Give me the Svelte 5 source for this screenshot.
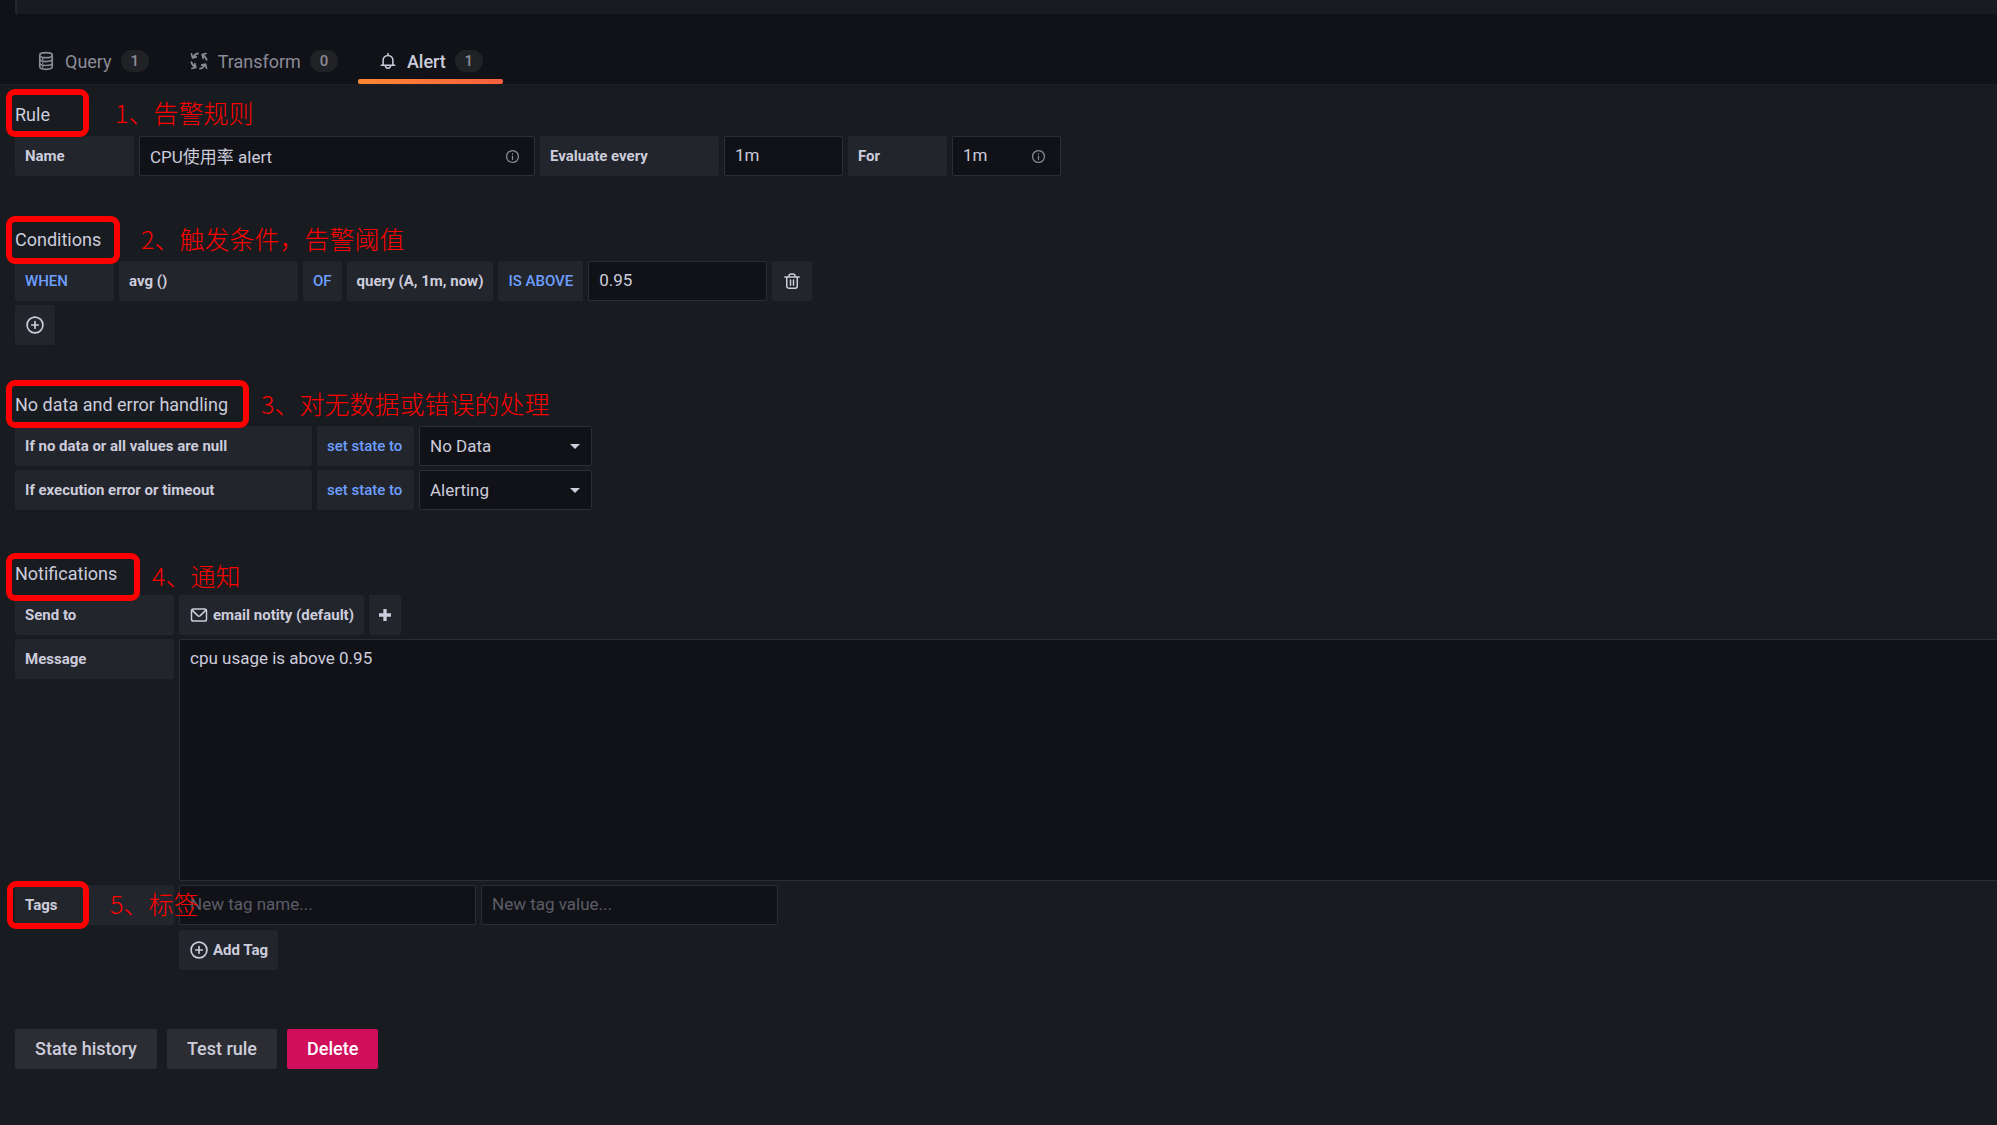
<script lang="ts">
  type Tab = { label: string; icon: string; count: number };
  type Note = { left: number; top: number; width: number; textLeft: number; textTop: number; text: string };

  const tabs: Tab[] = [
    { label: 'Query', icon: 'database', count: 1 },
    { label: 'Transform', icon: 'process', count: 0 },
    { label: 'Alert', icon: 'bell', count: 1 },
  ];

  // freehand callouts laid over the editor
  const notes: Note[] = [
    { left: 6, top: 89, width: 83, textLeft: 115, textTop: 96, text: '1、告警规则' },
    { left: 6, top: 216, width: 114, textLeft: 141, textTop: 222, text: '2、触发条件，告警阈值' },
    { left: 6, top: 380, width: 243, textLeft: 261, textTop: 387, text: '3、对无数据或错误的处理' },
    { left: 6, top: 553, width: 134, textLeft: 152, textTop: 559, text: '4、通知' },
    { left: 7, top: 881, width: 82, textLeft: 110, textTop: 887, text: '5、标签' },
  ];

  let active = $state('Alert');
  let name = $state('CPU使用率 alert');
  let every = $state('1m');
  let pending = $state('1m');
  let threshold = $state('0.95');
  let noDataState = $state('No Data');
  let errorState = $state('Alerting');
  let message = $state('cpu usage is above 0.95');
  let tagName = $state('');
  let tagValue = $state('');
</script>

{#snippet icon(kind: string)}
  <svg class="icon {kind}" viewBox="0 0 24 24" aria-hidden="true">
    {#if kind === 'database'}
      <ellipse cx="12" cy="5" rx="7.5" ry="3" />
      <path d="M4.500 5v14c0 1.700 3.400 3 7.500 3s7.500-1.300 7.500-3V5M4.500 9.700c0 1.700 3.400 3 7.500 3s7.500-1.300 7.500-3M4.500 14.400c0 1.700 3.400 3 7.500 3s7.500-1.300 7.500-3" />
      <path d="M8 9.700v.1M8 14.400v.1M8 19v.1" />
    {:else if kind === 'process'}
      {#each [0, 90, 180, 270] as angle}
        <path d="M3 3.500l1.200 4.700 4.600-1.200M4.500 8C5.800 5.400 8 3.400 10.800 2.800" transform="rotate({angle} 12 12)" />
      {/each}
    {:else if kind === 'bell'}
      <path d="M12 2v2.500M5.500 17.500V11a6.500 6.500 0 0 1 13 0v6.500M3 17.500h18M8.500 18a3.500 3.500 0 0 0 7 0" />
    {:else if kind === 'info'}
      <circle cx="12" cy="12" r="9.5" />
      <path d="M12 11.500v5M12 7.200v.6" />
    {:else if kind === 'trash'}
      <path d="M2.500 6.500h19M5 6.500V19a2.500 2.500 0 0 0 2.500 2.500h9A2.500 2.500 0 0 0 19 19V6.500M8 6V5a2.500 2.500 0 0 1 2.500-2.500h3A2.500 2.500 0 0 1 16 5v1M10 10.500v7M14 10.500v7" />
    {:else if kind === 'plus-circle'}
      <circle cx="12" cy="12" r="9.5" />
      <path d="M12 8v8M8 12h8" />
    {:else if kind === 'envelope'}
      <rect x="2" y="4" width="20" height="16" rx="2.5" />
      <path d="M2.800 5.500l7.500 7.300a2.500 2.500 0 0 0 3.400 0l7.500-7.300" />
    {:else if kind === 'plus'}
      <path d="M12 3v18M3 12h18" />
    {/if}
  </svg>
{/snippet}

<div class="editor">
  <div class="panel-edge"></div>

  <div class="tabs" role="tablist">
    {#each tabs as tab (tab.label)}
      <button
        class="tab"
        class:active={active === tab.label}
        role="tab"
        aria-selected={active === tab.label}
        onclick={() => (active = tab.label)}
      >
        {@render icon(tab.icon)}
        <span>{tab.label}</span>
        <span class="counter">{tab.count}</span>
      </button>
    {/each}
  </div>

  <main class="content">
    <section class="group">
      <h2>Rule</h2>
      <div class="row">
        <label class="label w-name" for="rule-name">Name</label>
        <div class="field w-rule">
          <input id="rule-name" type="text" bind:value={name} />
          {@render icon('info')}
        </div>
        <label class="label w-segment" for="rule-every">Evaluate every</label>
        <div class="field w-every">
          <input id="rule-every" type="text" bind:value={every} />
        </div>
        <label class="label w-for" for="rule-for">For</label>
        <div class="field w-pending">
          <input id="rule-for" type="text" bind:value={pending} />
          {@render icon('info')}
        </div>
      </div>
    </section>

    <section class="group conditions">
      <h2>Conditions</h2>
      <div class="row">
        <button class="label keyword w-when">WHEN</button>
        <button class="label w-segment">avg ()</button>
        <span class="label keyword">OF</span>
        <button class="label">query (A, 1m, now)</button>
        <button class="label keyword">IS ABOVE</button>
        <div class="field w-segment">
          <input type="text" aria-label="Threshold" bind:value={threshold} />
        </div>
        <button class="label square" aria-label="Remove condition">{@render icon('trash')}</button>
      </div>
      <div class="row">
        <button class="label square" aria-label="Add condition">{@render icon('plus-circle')}</button>
      </div>
    </section>

    <section class="group">
      <h2>No data and error handling</h2>
      <div class="row">
        <label class="label w-wide" for="no-data">If no data or all values are null</label>
        <span class="label keyword w-state">set state to</span>
        <div class="field w-select">
          <select id="no-data" bind:value={noDataState}>
            <option>Alerting</option>
            <option>No Data</option>
            <option>Keep Last State</option>
            <option>Ok</option>
          </select>
          <span class="caret"></span>
        </div>
      </div>
      <div class="row">
        <label class="label w-wide" for="exec-error">If execution error or timeout</label>
        <span class="label keyword w-state">set state to</span>
        <div class="field w-select">
          <select id="exec-error" bind:value={errorState}>
            <option>Alerting</option>
            <option>Keep Last State</option>
          </select>
          <span class="caret"></span>
        </div>
      </div>
    </section>

    <section class="group notifications">
      <h2>Notifications</h2>
      <div class="row">
        <span class="label w-notify">Send to</span>
        <span class="label">{@render icon('envelope')}email notity (default)</span>
        <button class="label add" aria-label="Add notification">{@render icon('plus')}</button>
      </div>
      <div class="row">
        <label class="label w-notify" for="message">Message</label>
        <textarea id="message" bind:value={message}></textarea>
      </div>
      <div class="row">
        <label class="label w-notify" for="tag-name">Tags</label>
        <div class="tags">
          <div class="row">
            <div class="field w-wide">
              <input id="tag-name" type="text" placeholder="New tag name..." bind:value={tagName} />
            </div>
            <div class="field w-wide">
              <input type="text" aria-label="Tag value" placeholder="New tag value..." bind:value={tagValue} />
            </div>
          </div>
          <div class="row">
            <button class="label">{@render icon('plus-circle')}Add Tag</button>
          </div>
        </div>
      </div>
    </section>

    <div class="actions">
      <button>State history</button>
      <button>Test rule</button>
      <button class="danger">Delete</button>
    </div>
  </main>

  {#each notes as note (note.text)}
    <div class="mark" style="left: {note.left}px; top: {note.top}px; width: {note.width}px"></div>
    <div class="note" style="left: {note.textLeft}px; top: {note.textTop}px">{note.text}</div>
  {/each}
</div>

<style>
  :global(body) {
    background: #181b1f;
  }
  .editor {
    position: relative;
    min-height: 100vh;
    overflow: hidden;
    background: #181b1f;
    color: #ccccdc;
    font-family: Roboto, "Noto Sans CJK SC", sans-serif;
    font-size: 17px;
  }
  .editor * {
    box-sizing: border-box;
  }
  button, input, select, textarea {
    margin: 0;
    font: inherit;
    color: inherit;
  }
  button {
    border: 0;
    cursor: pointer;
  }

  .panel-edge {
    height: 14px;
    padding-left: 15px;
    background: #111217;
  }
  .panel-edge::before {
    content: '';
    display: block;
    height: 14px;
    border: 1px solid #25272c;
    border-width: 0 0 2px 2px;
    border-radius: 0 0 0 4px;
    background: #181b1f;
  }

  .tabs {
    display: flex;
    align-items: flex-end;
    height: 71px;
    padding-left: 16px;
    background: #111217;
    border-bottom: 1px solid #1e2025;
  }
  .tab {
    position: relative;
    display: flex;
    align-items: center;
    gap: 9px;
    height: 46px;
    padding: 0 20px;
    background: transparent;
    color: #8b8b97;
    font-size: 18px;
  }
  .tab.active {
    color: #ccccdc;
    font-weight: 500;
  }
  .tab.active::after {
    content: '';
    position: absolute;
    left: 0;
    right: 0;
    bottom: 0;
    height: 5px;
    border-radius: 2px;
    background: linear-gradient(90deg, #ff8833, #f55f3e);
  }
  .counter {
    width: 28px;
    height: 22px;
    border-radius: 11px;
    background: #212226;
    color: #8b8b97;
    font-size: 15px;
    font-weight: 500;
    line-height: 22px;
    text-align: center;
  }

  .icon {
    flex-shrink: 0;
    width: 20px;
    height: 20px;
    fill: none;
    stroke: currentColor;
    stroke-width: 2;
    stroke-linecap: round;
    stroke-linejoin: round;
  }
  .icon.bell, .icon.trash, .icon.envelope {
    width: 18px;
    height: 18px;
    margin: 0 1px;
  }
  .icon.info {
    width: 15px;
    height: 15px;
    margin-right: 14px;
    color: #8b8b97;
  }
  .icon.plus {
    width: 16px;
    height: 16px;
    stroke-width: 5;
    stroke-linecap: butt;
  }

  .content {
    padding: 19px 0 48px 15px;
  }
  .group {
    display: flex;
    flex-direction: column;
    gap: 4px;
    margin-bottom: 53px;
  }
  .group.conditions {
    margin-bottom: 49px;
  }
  .group.notifications {
    margin-bottom: 59px;
  }
  h2 {
    margin: 0 0 6px;
    font-size: 18px;
    font-weight: 400;
    line-height: 22px;
  }
  .row {
    display: flex;
    align-items: flex-start;
    gap: 5px;
  }
  .label {
    display: flex;
    align-items: center;
    gap: 4px;
    flex-shrink: 0;
    height: 40px;
    padding: 0 10px;
    border-radius: 2px;
    background: #22252b;
    font-size: 15px;
    font-weight: 700;
    white-space: nowrap;
  }
  .keyword {
    color: #6e9fff;
    font-weight: 500;
  }
  .square {
    width: 40px;
  }
  .add {
    width: 32px;
    padding: 0 8px;
  }

  .field {
    display: flex;
    align-items: center;
    position: relative;
    height: 40px;
    border: 1px solid #2d2e34;
    border-radius: 2px;
    background: #111217;
  }
  .field input, .field select {
    flex: 1;
    min-width: 0;
    height: 100%;
    padding: 0 10px;
    border: 0;
    outline: none;
    background: transparent;
    appearance: none;
  }
  .field input {
    padding-bottom: 2px;
    line-height: 22px;
  }
  .field option {
    background: #111217;
  }
  input::placeholder {
    color: #5c5d66;
    opacity: 1;
  }
  .caret {
    position: absolute;
    right: 11px;
    border: 5px solid transparent;
    border-top-color: currentColor;
    border-bottom: 0;
    pointer-events: none;
  }
  textarea {
    flex: 1;
    height: 242px;
    padding: 7px 10px;
    border: 1px solid #2d2e34;
    border-right: 0;
    border-radius: 2px 0 0 2px;
    outline: none;
    background: #111217;
    line-height: 22px;
    resize: none;
  }
  .tags {
    display: flex;
    flex-direction: column;
    gap: 5px;
  }

  .w-name { width: 119px; }
  .w-rule { width: 396px; }
  .w-segment { width: 179px; }
  .w-every { width: 119px; }
  .w-for { width: 99px; }
  .w-pending { width: 109px; }
  .w-when { width: 99px; }
  .w-wide { width: 297px; }
  .w-state { width: 97px; }
  .w-select { width: 173px; }
  .w-notify { width: 159px; }

  .actions {
    display: flex;
    gap: 10px;
  }
  .actions button {
    height: 40px;
    padding: 0 20px;
    border-radius: 2px;
    background: #2c2d32;
    font-size: 18px;
    font-weight: 500;
    line-height: 22px;
  }
  .actions .danger {
    background: #d10e5c;
    color: #fff;
  }

  .mark {
    position: absolute;
    height: 48px;
    border: 6px solid #f00;
    border-radius: 9px;
    pointer-events: none;
  }
  .note {
    position: absolute;
    color: #f00;
    font-family: "Noto Sans CJK SC", sans-serif;
    font-size: 25px;
    font-weight: 300;
    line-height: 32px;
    white-space: nowrap;
    pointer-events: none;
  }
</style>
